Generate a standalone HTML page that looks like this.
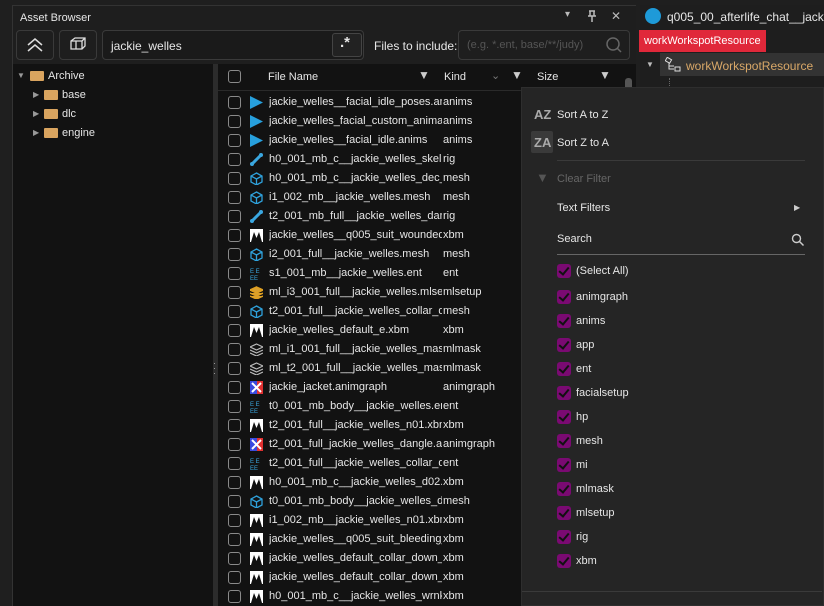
<!DOCTYPE html>
<html><head><meta charset="utf-8"><style>
*{box-sizing:border-box;margin:0;padding:0}
body{width:824px;height:606px;background:#1f1f1f;font-family:"Liberation Sans",sans-serif;font-size:11px;color:#e6e6e6;position:relative;overflow:hidden}
.a{position:absolute}
.t{position:absolute;white-space:nowrap}
.row{position:absolute;left:218px;width:400px;height:19px}
.cb{position:absolute;left:10px;top:3px;width:13px;height:13px;border:1.5px solid #8a8a8a;border-radius:3px}
.ic{position:absolute;left:32px;top:3px;width:13px;height:13px}
.nm{position:absolute;left:51px;top:3px;width:173px;overflow:hidden;white-space:nowrap}
.kd{position:absolute;left:225px;top:3px;white-space:nowrap}
.pc{position:absolute;left:557px;width:14px;height:14px;background:#7a0a72;border-radius:3px}
.pc:after{content:"";position:absolute;left:4px;top:1px;width:4px;height:8px;border:solid #111;border-width:0 2px 2px 0;transform:rotate(40deg)}
.pl{position:absolute;left:576px;white-space:nowrap}
</style></head><body>
<div class="a" style="left:12px;top:5px;width:624px;height:601px;background:#1e1e1e;border-left:1px solid #333;border-top:1px solid #333"></div>
<div class="t" style="left:20px;top:12px">Asset Browser</div>
<div class="t" style="left:565px;top:9px;color:#bbb;font-size:10px">▾</div>
<div class="a" style="left:588px;top:10px;width:8px;height:12px"><svg width="8" height="12"><path d="M1 1h6M2 1v5h4v-5M0 6h8M4 6v6" stroke="#bbb" stroke-width="1.5" fill="none"/></svg></div>
<div class="t" style="left:611px;top:9px;color:#bbb;font-size:12px">✕</div>
<div class="a" style="left:16px;top:30px;width:38px;height:30px;border:1px solid #3a3a3a;border-radius:4px"><svg width="36" height="28"><path d="M11 14l7-6 7 6M11 20l7-6 7 6" stroke="#ddd" stroke-width="1.5" fill="none"/></svg></div>
<div class="a" style="left:59px;top:30px;width:38px;height:30px;border:1px solid #3a3a3a;border-radius:4px"><svg width="36" height="28"><path d="M11 10l4-3h10v8l-3 3h-11zM11 10h11v8M22 10l3-3M16 10v8" stroke="#ddd" stroke-width="1.3" fill="none"/></svg></div>
<div class="a" style="left:102px;top:30px;width:262px;height:30px;border:1px solid #3a3a3a;border-radius:4px;background:#1a1a1a"></div>
<div class="t" style="left:111px;top:39px;font-size:12px">jackie_welles</div>
<div class="a" style="left:332px;top:33px;width:30px;height:24px;border:1px solid #444;border-radius:3px;background:#222"></div>
<div class="t" style="left:340px;top:34px;font-size:15px;font-weight:bold">.*</div>
<div class="t" style="left:374px;top:39px;font-size:12px">Files to include:</div>
<div class="a" style="left:458px;top:30px;width:172px;height:30px;border:1px solid #3a3a3a;border-radius:4px"></div>
<div class="t" style="left:467px;top:39px;color:#555;font-size:11px">(e.g. *.ent, base/**/judy)</div>
<div class="a" style="left:605px;top:36px"><svg width="18" height="18"><circle cx="8" cy="8" r="6" stroke="#666" stroke-width="1.5" fill="none"/><path d="M12 12l4 4" stroke="#666" stroke-width="1.5"/></svg></div>
<div class="a" style="left:13px;top:64px;width:200px;height:542px;background:#121212"></div>
<div class="a" style="left:213px;top:64px;width:5px;height:542px;background:#2c2c2c"></div>
<div class="t" style="left:213px;top:361px;color:#aaa;font-size:9px;line-height:5px">·<br>·<br>·</div>
<div class="t" style="left:17px;top:71px;color:#999;font-size:8px">▼</div>
<div class="a" style="left:30px;top:71px;width:14px;height:10px;background:#d9a45f;border-radius:1px"></div>
<div class="t" style="left:48px;top:70px">Archive</div>
<div class="t" style="left:33px;top:90px;color:#999;font-size:8px">▶</div><div class="a" style="left:44px;top:90px;width:14px;height:10px;background:#d9a45f;border-radius:1px"></div><div class="t" style="left:62px;top:89px">base</div>
<div class="t" style="left:33px;top:109px;color:#999;font-size:8px">▶</div><div class="a" style="left:44px;top:109px;width:14px;height:10px;background:#d9a45f;border-radius:1px"></div><div class="t" style="left:62px;top:108px">dlc</div>
<div class="t" style="left:33px;top:128px;color:#999;font-size:8px">▶</div><div class="a" style="left:44px;top:128px;width:14px;height:10px;background:#d9a45f;border-radius:1px"></div><div class="t" style="left:62px;top:127px">engine</div>
<div class="a" style="left:218px;top:64px;width:418px;height:542px;background:#121212"></div>
<div class="a" style="left:218px;top:90px;width:418px;height:1px;background:#2a2a2a"></div>
<div class="a" style="left:228px;top:70px;width:13px;height:13px;border:1.5px solid #8a8a8a;border-radius:3px"></div>
<div class="t" style="left:268px;top:71px">File Name</div>
<div class="t" style="left:418px;top:68px;color:#ccc;font-size:12px">▼</div>
<div class="t" style="left:444px;top:71px">Kind</div>
<div class="t" style="left:491px;top:69px;color:#777">⌄</div>
<div class="t" style="left:511px;top:68px;color:#ccc;font-size:12px">▼</div>
<div class="t" style="left:537px;top:71px">Size</div>
<div class="t" style="left:599px;top:68px;color:#ccc;font-size:12px">▼</div>
<div class="a" style="left:625px;top:78px;width:7px;height:20px;background:#555;border-radius:3px"></div>
<div class="a" style="left:636px;top:5px;width:4px;height:601px;background:#1f1f1f"></div>

<div class="row" style="top:93px"><div class="cb"></div><svg class="ic"><path d="M0 0L13 6.5L0 13z" fill="#27a0dd"/></svg><div class="nm">jackie_welles__facial_idle_poses.anims</div><div class="kd">anims</div></div>
<div class="row" style="top:112px"><div class="cb"></div><svg class="ic"><path d="M0 0L13 6.5L0 13z" fill="#27a0dd"/></svg><div class="nm">jackie_welles_facial_custom_animations</div><div class="kd">anims</div></div>
<div class="row" style="top:131px"><div class="cb"></div><svg class="ic"><path d="M0 0L13 6.5L0 13z" fill="#27a0dd"/></svg><div class="nm">jackie_welles__facial_idle.anims</div><div class="kd">anims</div></div>
<div class="row" style="top:150px"><div class="cb"></div><svg class="ic"><path d="M2 11L11 2" stroke="#3aa7e0" stroke-width="3"/><circle cx="2" cy="11" r="2" fill="#3aa7e0"/><circle cx="11" cy="2" r="2" fill="#3aa7e0"/></svg><div class="nm">h0_001_mb_c__jackie_welles_skeleton</div><div class="kd">rig</div></div>
<div class="row" style="top:169px"><div class="cb"></div><svg class="ic"><path d="M6.5 1L12 4v6l-5.5 3L1 10V4zM1 4l5.5 3L12 4M6.5 7v6" stroke="#2fa2dc" stroke-width="1.3" fill="none"/></svg><div class="nm">h0_001_mb_c__jackie_welles_dec_cyber</div><div class="kd">mesh</div></div>
<div class="row" style="top:188px"><div class="cb"></div><svg class="ic"><path d="M6.5 1L12 4v6l-5.5 3L1 10V4zM1 4l5.5 3L12 4M6.5 7v6" stroke="#2fa2dc" stroke-width="1.3" fill="none"/></svg><div class="nm">i1_002_mb__jackie_welles.mesh</div><div class="kd">mesh</div></div>
<div class="row" style="top:207px"><div class="cb"></div><svg class="ic"><path d="M2 11L11 2" stroke="#3aa7e0" stroke-width="3"/><circle cx="2" cy="11" r="2" fill="#3aa7e0"/><circle cx="11" cy="2" r="2" fill="#3aa7e0"/></svg><div class="nm">t2_001_mb_full__jackie_welles_dangle</div><div class="kd">rig</div></div>
<div class="row" style="top:226px"><div class="cb"></div><svg class="ic"><rect width="13" height="13" fill="#fff"/><path d="M1 13L4 3L6.5 9L9 3L12 13z" fill="#111"/></svg><div class="nm">jackie_welles__q005_suit_wounded_d</div><div class="kd">xbm</div></div>
<div class="row" style="top:245px"><div class="cb"></div><svg class="ic"><path d="M6.5 1L12 4v6l-5.5 3L1 10V4zM1 4l5.5 3L12 4M6.5 7v6" stroke="#2fa2dc" stroke-width="1.3" fill="none"/></svg><div class="nm">i2_001_full__jackie_welles.mesh</div><div class="kd">mesh</div></div>
<div class="row" style="top:264px"><div class="cb"></div><svg class="ic"><text x="0" y="6" font-size="6" fill="#3aa7e0">E E</text><text x="0" y="13" font-size="6" fill="#3aa7e0">EE</text></svg><div class="nm">s1_001_mb__jackie_welles.ent</div><div class="kd">ent</div></div>
<div class="row" style="top:283px"><div class="cb"></div><svg class="ic"><path d="M6.5 1L13 4L6.5 7L0 4zM0 7l6.5 3L13 7M0 10l6.5 3L13 10" stroke="#e0a020" stroke-width="1.5" fill="#d9a030"/></svg><div class="nm">ml_i3_001_full__jackie_welles.mlsetup</div><div class="kd">mlsetup</div></div>
<div class="row" style="top:302px"><div class="cb"></div><svg class="ic"><path d="M6.5 1L12 4v6l-5.5 3L1 10V4zM1 4l5.5 3L12 4M6.5 7v6" stroke="#2fa2dc" stroke-width="1.3" fill="none"/></svg><div class="nm">t2_001_full__jackie_welles_collar_down</div><div class="kd">mesh</div></div>
<div class="row" style="top:321px"><div class="cb"></div><svg class="ic"><rect width="13" height="13" fill="#fff"/><path d="M1 13L4 3L6.5 9L9 3L12 13z" fill="#111"/></svg><div class="nm">jackie_welles_default_e.xbm</div><div class="kd">xbm</div></div>
<div class="row" style="top:340px"><div class="cb"></div><svg class="ic"><path d="M6.5 1L13 4L6.5 7L0 4zM0 7l6.5 3L13 7M0 10l6.5 3L13 10" stroke="#bbb" stroke-width="1.2" fill="none"/></svg><div class="nm">ml_i1_001_full__jackie_welles_masksets</div><div class="kd">mlmask</div></div>
<div class="row" style="top:359px"><div class="cb"></div><svg class="ic"><path d="M6.5 1L13 4L6.5 7L0 4zM0 7l6.5 3L13 7M0 10l6.5 3L13 10" stroke="#bbb" stroke-width="1.2" fill="none"/></svg><div class="nm">ml_t2_001_full__jackie_welles_masksets</div><div class="kd">mlmask</div></div>
<div class="row" style="top:378px"><div class="cb"></div><svg class="ic"><rect width="13" height="13" fill="#3a4adf"/><rect x="7" width="6" height="13" fill="#e03030"/><path d="M2 2l9 9M11 2l-9 9" stroke="#fff" stroke-width="2"/></svg><div class="nm">jackie_jacket.animgraph</div><div class="kd">animgraph</div></div>
<div class="row" style="top:397px"><div class="cb"></div><svg class="ic"><text x="0" y="6" font-size="6" fill="#3aa7e0">E E</text><text x="0" y="13" font-size="6" fill="#3aa7e0">EE</text></svg><div class="nm">t0_001_mb_body__jackie_welles.ent</div><div class="kd">ent</div></div>
<div class="row" style="top:416px"><div class="cb"></div><svg class="ic"><rect width="13" height="13" fill="#fff"/><path d="M1 13L4 3L6.5 9L9 3L12 13z" fill="#111"/></svg><div class="nm">t2_001_full__jackie_welles_n01.xbm</div><div class="kd">xbm</div></div>
<div class="row" style="top:435px"><div class="cb"></div><svg class="ic"><rect width="13" height="13" fill="#3a4adf"/><rect x="7" width="6" height="13" fill="#e03030"/><path d="M2 2l9 9M11 2l-9 9" stroke="#fff" stroke-width="2"/></svg><div class="nm">t2_001_full_jackie_welles_dangle.animgraph</div><div class="kd">animgraph</div></div>
<div class="row" style="top:454px"><div class="cb"></div><svg class="ic"><text x="0" y="6" font-size="6" fill="#3aa7e0">E E</text><text x="0" y="13" font-size="6" fill="#3aa7e0">EE</text></svg><div class="nm">t2_001_full__jackie_welles_collar_down</div><div class="kd">ent</div></div>
<div class="row" style="top:473px"><div class="cb"></div><svg class="ic"><rect width="13" height="13" fill="#fff"/><path d="M1 13L4 3L6.5 9L9 3L12 13z" fill="#111"/></svg><div class="nm">h0_001_mb_c__jackie_welles_d02.xbm</div><div class="kd">xbm</div></div>
<div class="row" style="top:492px"><div class="cb"></div><svg class="ic"><path d="M6.5 1L12 4v6l-5.5 3L1 10V4zM1 4l5.5 3L12 4M6.5 7v6" stroke="#2fa2dc" stroke-width="1.3" fill="none"/></svg><div class="nm">t0_001_mb_body__jackie_welles_dec</div><div class="kd">mesh</div></div>
<div class="row" style="top:511px"><div class="cb"></div><svg class="ic"><rect width="13" height="13" fill="#fff"/><path d="M1 13L4 3L6.5 9L9 3L12 13z" fill="#111"/></svg><div class="nm">i1_002_mb__jackie_welles_n01.xbm</div><div class="kd">xbm</div></div>
<div class="row" style="top:530px"><div class="cb"></div><svg class="ic"><rect width="13" height="13" fill="#fff"/><path d="M1 13L4 3L6.5 9L9 3L12 13z" fill="#111"/></svg><div class="nm">jackie_welles__q005_suit_bleeding_d</div><div class="kd">xbm</div></div>
<div class="row" style="top:549px"><div class="cb"></div><svg class="ic"><rect width="13" height="13" fill="#fff"/><path d="M1 13L4 3L6.5 9L9 3L12 13z" fill="#111"/></svg><div class="nm">jackie_welles_default_collar_down_n</div><div class="kd">xbm</div></div>
<div class="row" style="top:568px"><div class="cb"></div><svg class="ic"><rect width="13" height="13" fill="#fff"/><path d="M1 13L4 3L6.5 9L9 3L12 13z" fill="#111"/></svg><div class="nm">jackie_welles_default_collar_down_d</div><div class="kd">xbm</div></div>
<div class="row" style="top:587px"><div class="cb"></div><svg class="ic"><rect width="13" height="13" fill="#fff"/><path d="M1 13L4 3L6.5 9L9 3L12 13z" fill="#111"/></svg><div class="nm">h0_001_mb_c__jackie_welles_wrnkl_n</div><div class="kd">xbm</div></div>

<div class="a" style="left:640px;top:5px;width:184px;height:601px;background:#1e1e1e"></div>
<div class="a" style="left:645px;top:8px;width:16px;height:16px;border-radius:8px;background:#1e9ad8"></div>
<div class="t" style="left:667px;top:10px;font-size:12px">q005_00_afterlife_chat__jackie_st</div>
<div class="a" style="left:639px;top:30px;width:127px;height:22px;background:#e0283a"></div>
<div class="t" style="left:644px;top:35px;font-size:11px;color:#fff;width:120px;overflow:hidden">workWorkspotResource</div>
<div class="t" style="left:646px;top:60px;color:#bbb;font-size:8px">▼</div>
<div class="a" style="left:660px;top:53px;width:164px;height:23px;background:#333"></div>
<div class="a" style="left:665px;top:57px"><svg width="16" height="16"><rect x="1" y="1" width="5" height="4" stroke="#ddd" fill="none" transform="rotate(30 3 3)"/><path d="M4 6v6h5M4 9h5" stroke="#ddd" fill="none"/><rect x="10" y="10" width="5" height="4" stroke="#ddd" fill="none"/></svg></div>
<div class="t" style="left:686px;top:59px;font-size:12px;color:#d9a868">workWorkspotResource</div>
<div class="a" style="left:669px;top:78px;width:1px;height:10px;border-left:1px dotted #666"></div>

<div class="a" style="left:521px;top:87px;width:303px;height:519px;background:#252525;border:1px solid #2e2e2e"></div>
<div class="t" style="left:534px;top:107px;color:#aaa;font-size:13px;font-weight:bold">AZ</div>
<div class="t" style="left:557px;top:109px">Sort A to Z</div>
<div class="a" style="left:531px;top:131px;width:22px;height:22px;background:#3a3a3a;border-radius:2px"></div>
<div class="t" style="left:534px;top:135px;color:#aaa;font-size:13px;font-weight:bold">ZA</div>
<div class="t" style="left:557px;top:137px">Sort Z to A</div>
<div class="a" style="left:557px;top:160px;width:248px;height:1px;background:#3a3a3a"></div>
<div class="t" style="left:536px;top:170px;color:#555;font-size:13px">▼</div>
<div class="t" style="left:557px;top:173px;color:#666">Clear Filter</div>
<div class="t" style="left:557px;top:202px">Text Filters</div>
<div class="t" style="left:794px;top:203px;color:#ccc;font-size:8px">▶</div>
<div class="t" style="left:557px;top:233px">Search</div>
<div class="a" style="left:791px;top:233px"><svg width="14" height="14"><circle cx="5.5" cy="5.5" r="4" stroke="#ccc" stroke-width="1.4" fill="none"/><path d="M8.5 8.5l4 4" stroke="#ccc" stroke-width="1.5"/></svg></div>
<div class="a" style="left:557px;top:254px;width:248px;height:1px;background:#666"></div>
<div class="pc" style="top:264px"></div><div class="pl" style="top:265px">(Select All)</div>
<div class="pc" style="top:290px"></div><div class="pl" style="top:291px">animgraph</div>
<div class="pc" style="top:314px"></div><div class="pl" style="top:315px">anims</div>
<div class="pc" style="top:338px"></div><div class="pl" style="top:339px">app</div>
<div class="pc" style="top:362px"></div><div class="pl" style="top:363px">ent</div>
<div class="pc" style="top:386px"></div><div class="pl" style="top:387px">facialsetup</div>
<div class="pc" style="top:410px"></div><div class="pl" style="top:411px">hp</div>
<div class="pc" style="top:434px"></div><div class="pl" style="top:435px">mesh</div>
<div class="pc" style="top:458px"></div><div class="pl" style="top:459px">mi</div>
<div class="pc" style="top:482px"></div><div class="pl" style="top:483px">mlmask</div>
<div class="pc" style="top:506px"></div><div class="pl" style="top:507px">mlsetup</div>
<div class="pc" style="top:530px"></div><div class="pl" style="top:531px">rig</div>
<div class="pc" style="top:554px"></div><div class="pl" style="top:555px">xbm</div>
<div class="a" style="left:522px;top:591px;width:300px;height:1px;background:#3a3a3a"></div>
</body></html>
